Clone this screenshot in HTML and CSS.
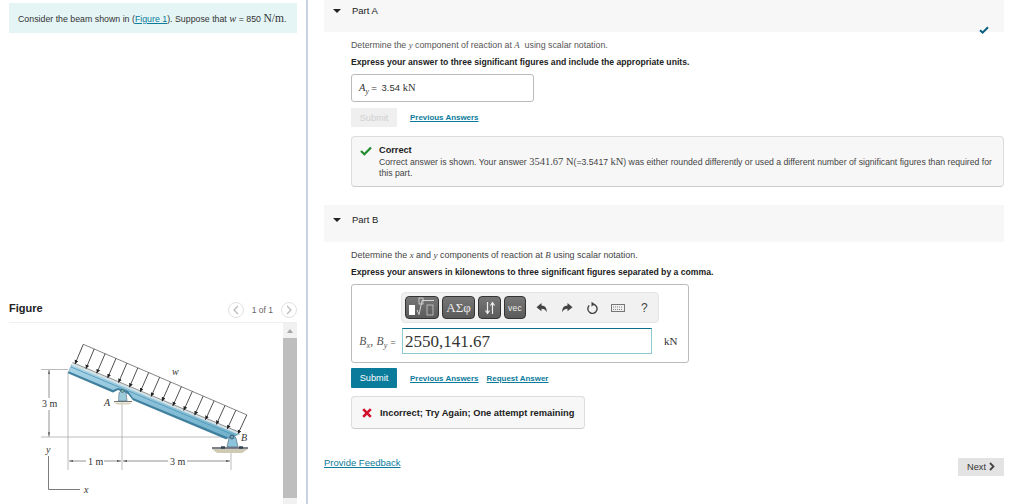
FILE: index.html
```html
<!DOCTYPE html>
<html lang="en">
<head>
<meta charset="utf-8">
<title>Beam reactions</title>
<link rel="stylesheet" href="styles.css">
</head>
<body>
<div class="page">
  <aside class="left">
    <div class="intro">Consider the beam shown in (<a class="link" href="#">Figure 1</a>). Suppose that <i class="serif w-var">w</i> = 850 <span class="serif big">N/m</span>.</div>
    <div class="fig-head">
      <h2 class="fig-title">Figure</h2>
      <div class="pager">
        <span class="page-btn"><svg width="8" height="10" viewBox="0 0 8 10"><path d="M6 1 2 5l4 4" fill="none" stroke="#bbb" stroke-width="1.3"/></svg></span>
        <span class="page-count">1 of 1</span>
        <span class="page-btn"><svg width="8" height="10" viewBox="0 0 8 10"><path d="M2 1l4 4-4 4" fill="none" stroke="#bbb" stroke-width="1.3"/></svg></span>
      </div>
    </div>
    <div class="fig-body">
      <svg class="diagram" width="274" height="181" viewBox="9 323 274 181">
        <defs>
          <marker id="ah" markerWidth="6" markerHeight="6" refX="5" refY="2.5" orient="auto"><path d="M0 0 5 2.5 0 5z" fill="#222"/></marker>
          <marker id="dh" markerWidth="7" markerHeight="5" refX="6" refY="2" orient="auto-start-reverse"><path d="M0 .6 6 2 0 3.4z" fill="#555"/></marker>
          <linearGradient id="bm" x1="0" y1="0" x2="0" y2="1"><stop offset="0" stop-color="#a9d5e8"/><stop offset="1" stop-color="#6fb0cc"/></linearGradient>
        </defs>
        <g stroke="#aaa" stroke-width=".8" fill="none">
          <path d="M41 369.5H68M41 437H228M68 372V470M122 392V470M231 450V470"/>
        </g>
        <g stroke="#666" stroke-width=".7" fill="none">
          <path d="M49 370V398M49 410V436.5" marker-start="url(#dh)" marker-end="url(#dh)"/>
          <path d="M69 461H86M104 461H121" marker-start="url(#dh)" marker-end="url(#dh)"/>
          <path d="M123 461H168M187 461H230" marker-start="url(#dh)" marker-end="url(#dh)"/>
          <path d="M48.500 456V489.500H80" stroke="#444"/>
        </g>
        <path d="M72 364 240 434 226 439 133 400 128 393 118 389 113 392 68 373z" fill="url(#bm)" stroke="#5b8ea6" stroke-width=".5"/>
        <path d="M69 371.500 113 390 118 388 128 391 133 398 228 437.500 226 439 133 400 128 394 118 390 113 392.500 68 373z" fill="#3f7f9d"/>
        <path d="M71 367 236 436" stroke="#4f93b3" stroke-width=".8"/>
        <path d="M72 364 240 434" stroke="#d5e2e6" stroke-width="2.200"/>
        <path d="M72.500 362.500 240 432.500" stroke="#444" stroke-width=".6"/>
        <path d="M83.300 344.300 246.800 414.900" stroke="#333" stroke-width=".6"/>
        <g stroke="#222" stroke-width=".8">
          <line x1="83.300" y1="344.300" x2="75" y2="364" marker-end="url(#ah)"/>
          <line x1="94.200" y1="349" x2="85.900" y2="368.700" marker-end="url(#ah)"/>
          <line x1="105.100" y1="353.700" x2="96.700" y2="373.300" marker-end="url(#ah)"/>
          <line x1="116" y1="358.400" x2="107.600" y2="378" marker-end="url(#ah)"/>
          <line x1="126.900" y1="363.100" x2="118.500" y2="382.600" marker-end="url(#ah)"/>
          <line x1="137.800" y1="367.900" x2="129.400" y2="387.300" marker-end="url(#ah)"/>
          <line x1="148.700" y1="372.600" x2="140.200" y2="391.900" marker-end="url(#ah)"/>
          <line x1="159.600" y1="377.300" x2="151.100" y2="396.600" marker-end="url(#ah)"/>
          <line x1="170.500" y1="382" x2="162" y2="401.200" marker-end="url(#ah)"/>
          <line x1="181.400" y1="386.700" x2="172.800" y2="405.900" marker-end="url(#ah)"/>
          <line x1="192.300" y1="391.400" x2="183.700" y2="410.500" marker-end="url(#ah)"/>
          <line x1="203.200" y1="396.100" x2="194.600" y2="415.200" marker-end="url(#ah)"/>
          <line x1="214.100" y1="400.800" x2="205.400" y2="419.800" marker-end="url(#ah)"/>
          <line x1="225" y1="405.500" x2="216.300" y2="424.500" marker-end="url(#ah)"/>
          <line x1="235.900" y1="410.200" x2="227.200" y2="429.100" marker-end="url(#ah)"/>
          <line x1="246.800" y1="414.900" x2="238" y2="433.800" marker-end="url(#ah)"/>
        </g>
        <path d="M114 402.500h18l-3 2h-12z" fill="#d8d3bf"/>
        <path d="M114 401.500H132" stroke="#777" stroke-width="1"/>
        <path d="M118.500 401 119 393a3.800 3.800 0 0 1 7 0l1 8z" fill="#9ccbdc" stroke="#567" stroke-width=".6"/>
        <circle cx="122.500" cy="391" r="1.600" fill="#7ba" stroke="#345" stroke-width=".5"/>
        <path d="M212 449h36l-6 4h-25z" fill="#cfcab3"/>
        <path d="M212 448H248" stroke="#556" stroke-width="1.600"/>
        <path d="M221 447.500h4M239 447.500h4" stroke="#345" stroke-width="2.400"/>
        <path d="M227 447 229 438a4 4 0 0 1 7 0l2 9z" fill="#8cc4dc" stroke="#456" stroke-width=".6"/>
        <circle cx="232" cy="437" r="2" fill="#6a9fb5" stroke="#234" stroke-width=".6"/>
        <g class="fig-label">
          <text x="42" y="407">3 m</text>
          <text x="88" y="465">1 m</text>
          <text x="170" y="465">3 m</text>
          <text class="it" x="172" y="375">w</text>
          <text class="it" x="104" y="406">A</text>
          <text class="it" x="241" y="441">B</text>
          <text class="it" x="46" y="453">y</text>
          <text class="it" x="84" y="493">x</text>
        </g>
      </svg>
      <div class="scroll">
        <div class="scroll-cap"><span class="scroll-up"></span></div>
        <div class="scroll-thumb"></div>
      </div>
    </div>
  </aside>
  <main class="right">
    <section class="part">
      <header class="part-head part-head-a">
        <span class="caret"></span><span class="part-name">Part A</span>
        <svg class="done" width="10" height="8" viewBox="0 0 10 8"><path d="M1 4.200 3.600 6.600 9 1.200" fill="none" stroke="#0a5f7f" stroke-width="2"/></svg>
      </header>
      <div class="part-body part-body-a">
        <p class="q q-a">Determine the <i class="serif">y</i> component of reaction at <i class="serif">A</i> &nbsp;using scalar notation.</p>
        <p class="inst">Express your answer to three significant figures and include the appropriate units.</p>
        <div class="ans-a"><span class="serif"><i>A<sub>y</sub></i></span> = <span class="val-a">3.54 <span class="serif">kN</span></span></div>
        <div class="actions actions-a">
          <span class="btn btn-off">Submit</span>
          <a class="action-link" href="#">Previous Answers</a>
        </div>
        <div class="msg msg-ok">
          <svg class="msg-ic" width="12" height="10" viewBox="0 0 12 10"><path d="M1 5 4.400 8.200 11 1.400" fill="none" stroke="#1f8a2e" stroke-width="2.200"/></svg>
          <div>
            <div class="msg-title">Correct</div>
            <div class="msg-text">Correct answer is shown. Your answer <span class="serif msg-num">3541.67 N</span>(=3.5417 <span class="serif msg-num">kN</span>) was either rounded differently or used a different number of significant figures than required for this part.</div>
          </div>
        </div>
      </div>
    </section>
    <section class="part">
      <header class="part-head part-head-b">
        <span class="caret"></span><span class="part-name">Part B</span>
      </header>
      <div class="part-body part-body-b">
        <p class="q">Determine the <i class="serif">x</i> and <i class="serif">y</i> components of reaction at <i class="serif">B</i> using scalar notation.</p>
        <p class="inst">Express your answers in kilonewtons to three significant figures separated by a comma.</p>
        <div class="editor">
          <div class="toolbar">
            <span class="tool tool-root">
              <svg width="30" height="21" viewBox="0 0 30 21"><rect x="2" y="8" width="6" height="10" fill="#fff"/><rect x="12" y="1" width="4" height="6" fill="none" stroke="#ddd" stroke-width=".8"/><path d="M10 13l2 4.500 3-14h12" fill="none" stroke="#ddd" stroke-width=".9"/><rect x="20" y="8" width="6" height="10" fill="none" stroke="#ccc" stroke-width=".8"/></svg>
            </span>
            <span class="tool tool-greek">ΑΣφ</span>
            <span class="tool tool-arrows">
              <svg width="12" height="14" viewBox="0 0 12 14"><path d="M3.500 1v11M1.500 9.500l2 3 2-3M8.500 13V2M6.500 4.500l2-3 2 3" fill="none" stroke="#eee" stroke-width="1.200"/></svg>
            </span>
            <span class="tool tool-vec">vec</span>
            <span class="tools-plain">
              <svg width="12" height="12" viewBox="0 0 12 12"><path d="M5.500 1 .5 5.300l5 4V6.800c2.300 0 4 .7 5.200 3.500.4-4.200-1.700-6.500-5.200-6.700z" fill="#444"/></svg>
              <svg width="12" height="12" viewBox="0 0 12 12"><path d="M6.500 1 11.500 5.300l-5 4V6.800c-2.300 0-4 .7-5.200 3.500C.9 6.100 3 3.800 6.500 3.600z" fill="#444"/></svg>
              <svg width="12" height="14" viewBox="0 0 12 14"><path d="M7 3.200A4.600 4.600 0 1 1 3.200 4.500" fill="none" stroke="#444" stroke-width="1.400"/><path d="M5.500 .8 9 3.200 5.500 5.400z" fill="#444"/></svg>
              <svg width="14" height="8" viewBox="0 0 14 8"><rect x=".5" y=".5" width="13" height="7" fill="#eee" stroke="#777"/><path d="M2 3h10M2 5.500h10" stroke="#888" stroke-dasharray="1 1"/></svg>
              <span class="q-mark">?</span>
            </span>
          </div>
          <div class="input-row">
            <span class="in-label serif"><i>B<sub>x</sub></i>, <i>B<sub>y</sub></i> <span class="eq">=</span></span>
            <div class="input">2550,141.67</div>
            <span class="in-unit serif">kN</span>
          </div>
        </div>
        <div class="actions actions-b">
          <span class="btn btn-on">Submit</span>
          <a class="action-link" href="#">Previous Answers</a>
          <a class="action-link" href="#">Request Answer</a>
        </div>
        <div class="msg msg-bad">
          <svg class="bad-ic" width="10" height="10" viewBox="0 0 10 10"><path d="M1.200 1.200l7.600 7.600M8.800 1.200 1.200 8.800" stroke="#d0122c" stroke-width="2.600"/></svg>
          <span class="bad-text">Incorrect; Try Again; One attempt remaining</span>
        </div>
      </div>
    </section>
    <footer class="foot">
      <a class="feedback" href="#">Provide Feedback</a>
      <span class="next">Next <svg width="6" height="9" viewBox="0 0 6 9"><path d="M1 1l3.500 3.500L1 8" fill="none" stroke="#444" stroke-width="1.800"/></svg></span>
    </footer>
  </main>
</div>
</body>
</html>
```
FILE: styles.css
```css
* { box-sizing: border-box; }
html, body { margin: 0; padding: 0; background: #fff; }
body { font-family: "Liberation Sans", Arial, sans-serif; color: #333; font-size: 9.6px; }
.page { display: flex; width: 1024px; height: 504px; overflow: hidden; }
.serif { font-family: "Liberation Serif", serif; }
.big { font-size: 11.500px; }
.w-var { font-size: 10.500px; }
sub { font-size: 70%; line-height: 0; }
p { margin: 0; }
.left { width: 308px; height: 504px; padding: 3px 9px 0; border-right: 2px solid #c5d3e2; flex: none; }
.intro { width: 288px; height: 30px; background: #e5f5f6; padding: 0 9px; line-height: 30px; font-size: 8.800px; white-space: nowrap; }
.link { color: #0b7b9b; }
.fig-head { margin-top: 261px; height: 29px; display: flex; align-items: center; justify-content: space-between; border-bottom: 1px solid #eee; padding: 2px 0 3px; width: 288px; }
.fig-title { margin: 0; font-size: 11px; font-weight: bold; color: #222; }
.pager { display: flex; align-items: center; gap: 8px; margin-top: 4px; font-size: 8.500px; color: #666; }
.page-btn { width: 16px; height: 16px; border: 1px solid #e2e2e2; border-radius: 50%; display: flex; align-items: center; justify-content: center; }
.fig-body { display: flex; width: 288px; }
.diagram { display: block; flex: none; }
.fig-label { font-family: "Liberation Serif", serif; font-size: 10px; fill: #333; }
.fig-label .it { font-style: italic; }
.scroll { width: 14px; height: 181px; flex: none; display: flex; flex-direction: column; background: #f1f1f1; }
.scroll-cap { height: 15px; background: #f1f1f1; display: flex; align-items: center; justify-content: center; }
.scroll-up { width: 0; height: 0; border: 3.500px solid transparent; border-top: 0; border-bottom: 4px solid #a5a5a5; }
.scroll-thumb { height: 160px; background: #bebebe; }
.right { width: 680px; margin-left: 16px; flex: none; }
.part-head { position: relative; background: #f7f7f7; padding: 5px 0 0 9px; display: flex; align-items: flex-start; height: 37px; }
.part-head-a { height: 32px; }
.part-head-b { padding-top: 9px; }
.caret { width: 0; height: 0; border: 4px solid transparent; border-top: 4px solid #222; border-bottom: 0; margin-top: 4px; }
.part-name { margin-left: 11px; font-size: 9.500px; color: #222; line-height: 12px; }
.done { position: absolute; right: 15px; top: 26px; }
.part-body { padding-left: 27px; }
.part-body-a { height: 173px; padding-top: 8px; }
.part-body-b { padding-top: 8px; }
.q { font-size: 8.950px; line-height: 11px; color: #444; }
.q-a { font-size: 8.800px; color: #555; }
.inst { font-size: 8.650px; line-height: 11px; font-weight: bold; margin-top: 6px; color: #222; }
.ans-a { width: 183px; height: 28px; margin-top: 6px; border: 1px solid #bbb; border-radius: 3px; padding-left: 7px; line-height: 26px; font-size: 9.500px; }
.ans-a .serif { font-size: 10.500px; }
.val-a { margin-left: 2px; }
.actions { display: flex; align-items: center; }
.actions-a { margin-top: 6px; height: 19px; }
.actions-b { margin-top: 5px; height: 20px; }
.btn { width: 46px; height: 100%; display: flex; align-items: center; justify-content: center; font-size: 9.200px; margin-right: 13px; }
.btn-off { background: #efefef; color: #d0d0d0; }
.btn-on { background: #0b7b9b; color: #fff; border-radius: 1px; }
.action-link { color: #0b7b9b; font-weight: bold; font-size: 7.950px; margin-right: 8px; }
.msg { background: #f7f7f7; border: 1px solid #ddd; border-bottom-color: #ccc; border-radius: 4px; }
.msg-ok { display: flex; margin-top: 9px; height: 51px; width: 653px; padding: 8px 8px 0 8px; }
.msg-ic { flex: none; margin: 1px 7px 0 0; }
.msg-title { font-size: 9.200px; font-weight: bold; color: #222; line-height: 11px; }
.msg-text { font-size: 8.700px; line-height: 11px; color: #444; }
.msg-num { font-size: 10.500px; }
.msg-bad { display: flex; align-items: center; width: 234px; height: 33px; margin-top: 8px; padding-left: 10px; }
.bad-ic { flex: none; margin-right: 8px; }
.bad-text { font-weight: bold; font-size: 9.300px; color: #222; white-space: nowrap; }
.editor { width: 338px; height: 79px; margin-top: 6px; border: 1px solid #bbb; border-radius: 3px; padding: 7px 0 0 49px; }
.toolbar { width: 258px; height: 31px; background: #f1f1f1; border: 1px solid #e4e4e4; border-radius: 4px; padding: 3px; display: flex; gap: 3px; align-items: stretch; }
.tool { background: linear-gradient(#767676, #5b5b5b); border: 1px solid #333; border-radius: 4px; color: #eee; display: flex; align-items: center; justify-content: center; }
.tool-root { width: 34px; }
.tool-greek { width: 33px; font-family: "Liberation Serif", serif; font-size: 13px; }
.tool-arrows { width: 23px; }
.tool-vec { width: 22px; font-size: 8.500px; letter-spacing: .3px; }
.tools-plain { display: flex; align-items: center; gap: 13px; margin-left: 7px; }
.q-mark { font-size: 12px; color: #444; margin-left: 3px; }
.input-row { display: flex; align-items: center; margin-top: 5px; margin-left: -49px; height: 26px; }
.in-label { width: 50px; text-align: right; font-size: 11.500px; letter-spacing: .2px; color: #555; white-space: nowrap; padding-right: 6px; }
.eq { font-family: "Liberation Sans", sans-serif; font-size: 9px; }
.input { width: 250px; height: 26px; border: 1px solid #8ccad3; border-top: 1px solid #0b6f8c; font-family: "Liberation Serif", serif; font-size: 17px; line-height: 26px; padding-left: 2px; color: #333; }
.in-unit { margin-left: 12px; font-size: 11px; }
.foot { display: flex; justify-content: space-between; align-items: center; padding-top: 28px; }
.feedback { color: #0b7b9b; font-size: 9.500px; margin-bottom: 8px; }
.next { width: 46px; height: 18px; background: #e3e3e3; display: flex; align-items: center; justify-content: center; gap: 3px; font-size: 9.200px; color: #333; }
```
